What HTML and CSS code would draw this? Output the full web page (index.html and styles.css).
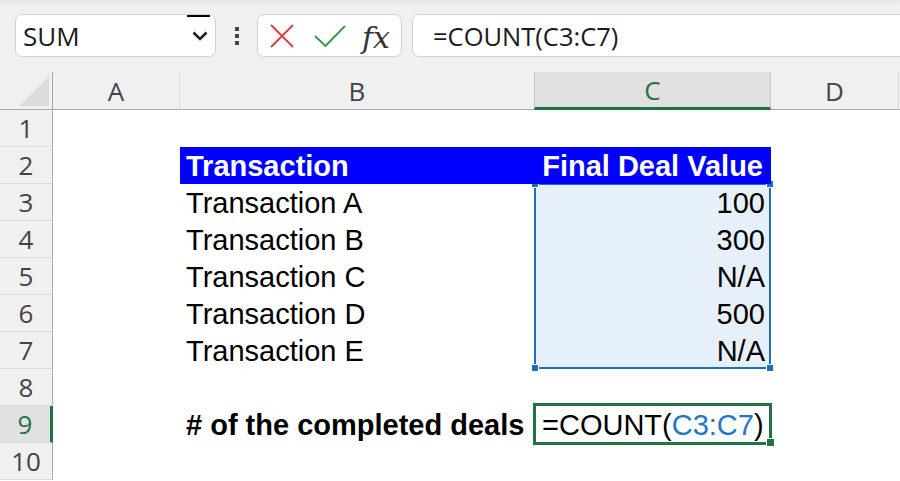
FILE: index.html
```html
<!DOCTYPE html>
<html lang="en">
<head>
    <meta charset="UTF-8">
    <meta name="viewport" content="width=device-width, initial-scale=1.0">
    <title>COUNT</title>
    <link rel="stylesheet" href="styles.css">
</head>
<body>
    <div class="toolbar">
        <div class="namebox">
            <span class="name">SUM</span>
            <span class="mark"></span>
            <svg class="chev" width="16" height="10" viewBox="0 0 16 10"><path d="M1.5 1.5L8 8L14.5 1.5"/></svg>
        </div>
        <div class="dots"><i></i><i></i><i></i></div>
        <div class="btns">
            <svg class="cancel" width="24" height="24" viewBox="0 0 24 24"><path d="M1 1L23 23M23 1L1 23"/></svg>
            <svg class="enter" width="32" height="22" viewBox="0 0 32 22"><path d="M1 11L11.5 21L31 1"/></svg>
            <span class="fx">fx</span>
        </div>
        <div class="formula">=COUNT(C3:C7)</div>
    </div>

    <div class="sheet">
        <div class="corner"><span class="tri"></span></div>
        <div class="colhead">A</div>
        <div class="colhead">B</div>
        <div class="colhead on">C</div>
        <div class="colhead">D</div>
        <div class="colhead"></div>

        <div class="rowhead">1</div>
        <div class="cell"></div><div class="cell"></div><div class="cell"></div><div class="cell"></div><div class="cell"></div>

        <div class="rowhead">2</div>
        <div class="cell"></div>
        <div class="cell head">Transaction</div>
        <div class="cell head num">Final Deal Value</div>
        <div class="cell"></div><div class="cell"></div>

        <div class="rowhead">3</div>
        <div class="cell"></div>
        <div class="cell">Transaction A</div>
        <div class="cell num first">
            <div class="range"><i class="tl"></i><i class="tr"></i><i class="bl"></i><i class="br"></i></div>
            100
        </div>
        <div class="cell"></div><div class="cell"></div>

        <div class="rowhead">4</div>
        <div class="cell"></div>
        <div class="cell">Transaction B</div>
        <div class="cell num">300</div>
        <div class="cell"></div><div class="cell"></div>

        <div class="rowhead">5</div>
        <div class="cell"></div>
        <div class="cell">Transaction C</div>
        <div class="cell num">N/A</div>
        <div class="cell"></div><div class="cell"></div>

        <div class="rowhead">6</div>
        <div class="cell"></div>
        <div class="cell">Transaction D</div>
        <div class="cell num">500</div>
        <div class="cell"></div><div class="cell"></div>

        <div class="rowhead">7</div>
        <div class="cell"></div>
        <div class="cell">Transaction E</div>
        <div class="cell num">N/A</div>
        <div class="cell"></div><div class="cell"></div>

        <div class="rowhead">8</div>
        <div class="cell"></div><div class="cell"></div><div class="cell"></div><div class="cell"></div><div class="cell"></div>

        <div class="rowhead on">9</div>
        <div class="cell"></div>
        <div class="cell bold"># of the completed deals</div>
        <div class="cell active">=COUNT(<span class="ref">C3:C7</span>)<span class="fill"></span></div>
        <div class="cell"></div><div class="cell"></div>

        <div class="rowhead">10</div>
        <div class="cell"></div><div class="cell"></div><div class="cell"></div><div class="cell"></div><div class="cell"></div>
    </div>
</body>
</html>
```

FILE: styles.css
```css
body {
    margin: 0;
    background: #fff;
    overflow: hidden;
}

/* formula bar */
.toolbar {
    height: 72px;
    box-sizing: border-box;
    padding: 14px 0 0 15px;
    display: flex;
    align-items: flex-start;
    background: linear-gradient(#e6e6e6, #f0f0f0 6px);
    font-family: "Open Sans", "Noto Sans", sans-serif;
    color: #1b1b1b;
}

.namebox,
.btns,
.formula {
    height: 43px;
    box-sizing: border-box;
    border: 1px solid #d2d2d2;
    border-radius: 7px;
    background: #fff;
    display: flex;
    align-items: center;
}

.namebox {
    width: 201px;
    padding-left: 7px;
    position: relative;
}

.name {
    font-size: 26px;
}

.mark {
    position: absolute;
    top: 0;
    right: 5px;
    width: 23px;
    height: 2px;
    background: #000;
}

.chev {
    margin-left: auto;
    margin-right: 7px;
}

.chev path {
    fill: none;
    stroke: #222;
    stroke-width: 2.6;
}

.dots {
    margin-top: 13px;
    margin-left: 19px;
    display: flex;
    flex-direction: column;
    gap: 3px;
}

.dots i {
    width: 4px;
    height: 4px;
    background: #444;
}

.btns {
    width: 145px;
    margin-left: 18px;
    padding-left: 12px;
}

.btns path {
    fill: none;
    stroke-width: 2;
}

.cancel path {
    stroke: #e2403f;
}

.enter {
    margin-left: 20px;
}

.enter path {
    stroke: #3b9a4b;
}

.fx {
    margin-left: 16px;
    margin-top: 4px;
    font-family: "DejaVu Serif", serif;
    font-style: italic;
    font-size: 30px;
    line-height: 1;
    color: #333;
}

.formula {
    flex: 1;
    margin-left: 10px;
    margin-right: -12px;
    padding-left: 20px;
    font-size: 25.5px;
}

/* sheet */
.sheet {
    display: grid;
    grid-template-columns: 53px 127px 355px 236px 128px 1fr;
    grid-template-rows: 38px repeat(10, 37px);
    background: #fff;
    isolation: isolate;
    font-family: "Open Sans", "Noto Sans", sans-serif;
}

.corner,
.colhead,
.rowhead {
    box-sizing: border-box;
    background: #f0f0f0;
    color: #444;
    font-size: 26px;
    display: flex;
    align-items: center;
    justify-content: center;
}

.corner {
    border-right: 1px solid #ababab;
    border-bottom: 1px solid #ababab;
    justify-content: flex-end;
    align-items: flex-end;
    padding: 0 3px 3px 0;
}

.tri {
    width: 0;
    height: 0;
    border-left: 30px solid transparent;
    border-bottom: 30px solid #dcdcdc;
}

.colhead {
    border-bottom: 1px solid #ababab;
    border-right: 1px solid #dcdcdc;
}

.colhead.on {
    background: #e1e1e1;
    color: #217346;
    border-left: 1px solid #c6c6c6;
    border-right: 1px solid #c6c6c6;
    border-bottom: 3px solid #217346;
    margin-left: -1px;
}

.rowhead {
    border-right: 1px solid #ababab;
    border-bottom: 1px solid #dcdcdc;
}

.rowhead.on {
    background: #e1e1e1;
    color: #217346;
    border-right: 3px solid #217346;
}

.cell {
    font-family: "Liberation Sans", Arial, sans-serif;
    font-size: 29px;
    line-height: 37px;
    padding: 1px 6px 0;
    color: #000;
    white-space: nowrap;
}

.num {
    text-align: right;
    padding-right: 6px;
}

.head {
    background: #0000ff;
    color: #fff;
    font-weight: bold;
}

.head.num {
    padding-right: 8px;
}

.bold {
    font-weight: bold;
}

.first {
    position: relative;
}

.range {
    position: absolute;
    left: -1px;
    top: -1px;
    width: 237px;
    height: 186px;
    box-sizing: border-box;
    border: 2px solid #1b6fc2;
    background: #e6f0fa;
    z-index: -1;
}

.range i {
    position: absolute;
    width: 6px;
    height: 6px;
    background: #1b6fc2;
    box-shadow: 0 0 0 1px #fff;
}

.range .tl { left: -4px; top: -4px; }
.range .tr { right: -4px; top: -4px; }
.range .bl { left: -4px; bottom: -4px; }
.range .br { right: -4px; bottom: -4px; }

.active {
    position: relative;
    padding-left: 7px;
}

.active::after {
    content: "";
    position: absolute;
    top: -3px;
    left: -2px;
    right: -1px;
    bottom: -2px;
    border: 3px solid #217346;
}

.ref {
    color: #1f77c9;
}

.fill {
    position: absolute;
    right: -4px;
    bottom: -4px;
    width: 9px;
    height: 9px;
    box-sizing: border-box;
    border: 1px solid #fff;
    background: #217346;
    z-index: 1;
}
```
